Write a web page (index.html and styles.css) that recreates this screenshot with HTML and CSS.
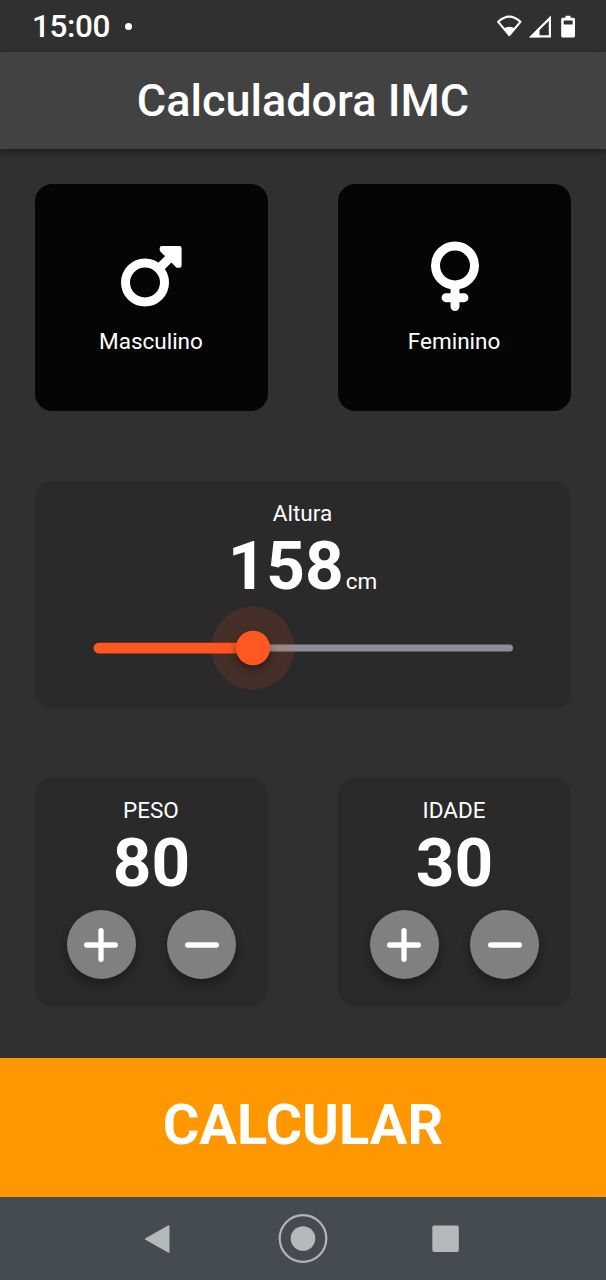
FILE: index.html
```html
<!DOCTYPE html>
<html lang="pt-BR">
<head>
<meta charset="utf-8">
<title>Calculadora IMC</title>
<link rel="stylesheet" href="styles.css">
</head>
<body>
<div class="screen">
  <div class="status-bar">
    <span class="clock">15:00</span>
    <span class="dot"></span>
    <svg class="status-icons" width="80" height="24" viewBox="0 0 80 24">
      <path d="M2.2 7.8Q13.3-2.6 24.4 7.8L13.3 21.2Z" fill="none" stroke="#fff" stroke-width="2.1" stroke-linejoin="round"/>
      <path d="M7.600 14.600Q13.3 10.800 19 14.600L13.3 22Z" fill="#fff"/>
      <path d="M35.6 22.3L53.9 4.2V22.3Z" fill="none" stroke="#fff" stroke-width="2.2"/>
      <path d="M33.5 23.3L43.500 13.500V23.3Z" fill="#fff"/>
      <path fill="#fff" fill-rule="evenodd" d="M66.500 3.800H69.500V1.700H74.500V3.800H77.500Q79 3.800 79 5.300V22Q79 23.500 77.500 23.500H66.700Q65.200 23.500 65.200 22V5.300Q65.200 3.800 66.500 3.800ZM67.700 6.500V10.600H76.600V6.500Z"/>
    </svg>
  </div>
  <header class="app-bar">Calculadora IMC</header>
  <main class="content">
    <div class="row">
      <div class="card card-dark">
        <svg class="gender" width="70" height="72" viewBox="0 0 70 72">
          <circle cx="29" cy="42.500" r="19.500" fill="none" stroke="#fff" stroke-width="9"/>
          <path d="M42 29.500L57 14.500" stroke="#fff" stroke-width="9"/>
          <path d="M46 8.300H63.300V25.500H61.700L46 9.800Z" fill="#fff" stroke="#fff" stroke-width="4.600" stroke-linejoin="round"/>
        </svg>
        <span class="label">Masculino</span>
      </div>
      <div class="card card-dark">
        <svg class="gender" width="70" height="72" viewBox="0 0 70 72">
          <circle cx="35" cy="25.500" r="19.500" fill="none" stroke="#fff" stroke-width="9"/>
          <path d="M35 47V66.500M26 57.700H44" stroke="#fff" stroke-width="8.900" stroke-linecap="round"/>
        </svg>
        <span class="label">Feminino</span>
      </div>
    </div>
    <div class="row">
      <div class="card card-height">
        <span class="label">Altura</span>
        <div class="height"><span class="number">158</span><span class="label">cm</span></div>
        <svg class="slider" width="440" height="84" viewBox="0 0 440 84">
          <rect x="170" y="38.500" width="260" height="7" rx="3.500" fill="#8d8e98"/>
          <rect x="10.500" y="36.800" width="165" height="10.600" rx="5.300" fill="#ff5722"/>
          <circle cx="170" cy="42" r="41.500" fill="#ff5722" fill-opacity=".13"/>
          <circle class="thumb" cx="170" cy="42" r="17.200" fill="#ff5722"/>
        </svg>
      </div>
    </div>
    <div class="row">
      <div class="card">
        <span class="label">PESO</span>
        <span class="number">80</span>
        <div class="buttons">
          <button class="round" aria-label="Aumentar peso"><svg width="36" height="36" viewBox="0 0 36 36"><path d="M18 3.700V32.300M3.700 18H32.300"/></svg></button>
          <button class="round" aria-label="Diminuir peso"><svg width="36" height="36" viewBox="0 0 36 36"><path d="M3.700 18H32.300"/></svg></button>
        </div>
      </div>
      <div class="card">
        <span class="label">IDADE</span>
        <span class="number">30</span>
        <div class="buttons">
          <button class="round" aria-label="Aumentar idade"><svg width="36" height="36" viewBox="0 0 36 36"><path d="M18 3.700V32.300M3.700 18H32.300"/></svg></button>
          <button class="round" aria-label="Diminuir idade"><svg width="36" height="36" viewBox="0 0 36 36"><path d="M3.700 18H32.300"/></svg></button>
        </div>
      </div>
    </div>
  </main>
  <button class="calculate">CALCULAR</button>
  <nav class="nav-bar">
    <svg width="28" height="30" viewBox="0 0 28 30"><path d="M3 15L25.500 2.300V27.700Z" fill="#b4b9ba" stroke="#b4b9ba" stroke-width="2" stroke-linejoin="round"/></svg>
    <svg width="50" height="50" viewBox="0 0 50 50"><circle cx="26" cy="24.500" r="23.300" fill="none" stroke="#b0b5b8" stroke-width="2.200"/><circle cx="26" cy="24.500" r="12.300" fill="#b4b9ba"/></svg>
    <svg width="28" height="28" viewBox="0 0 28 28"><rect x=".3" y=".5" width="26.500" height="26.500" rx="2" fill="#b4b9ba"/></svg>
  </nav>
</div>
</body>
</html>
```
FILE: styles.css
```css
* { box-sizing: border-box; }
body { margin: 0; background: #303030; }
button { border: 0; padding: 0; font: inherit; color: inherit; }
svg { display: block; flex: none; overflow: visible; }

.screen {
  width: 606px;
  height: 1280px;
  display: flex;
  flex-direction: column;
  overflow: hidden;
  background: #303030;
  color: #fff;
  font-family: Roboto, sans-serif;
}

.status-bar {
  height: 52px;
  flex: none;
  display: flex;
  align-items: center;
  padding: 2px 30px 0 32px;
}
.clock { font-size: 31.500px; font-weight: 500; line-height: 36px; letter-spacing: -.4px; }
.dot { width: 7px; height: 7px; margin: 0 0 2px 15px; border-radius: 50%; background: #fff; }
.status-icons { margin: 0 0 3px auto; }

.app-bar {
  height: 97px;
  flex: none;
  display: flex;
  align-items: center;
  justify-content: center;
  z-index: 1;
  background: #424242;
  box-shadow: 0 3px 7px rgba(0, 0, 0, .4);
  font-size: 45px;
  font-weight: 500;
}

.content {
  flex: 1;
  display: flex;
  flex-direction: column;
  gap: 69.600px;
  padding: 34.600px 34.600px 52px;
}
.row { flex: 1; display: flex; gap: 69.400px; min-height: 0; }
.card {
  flex: 1;
  display: flex;
  flex-direction: column;
  align-items: center;
  padding-top: 18.500px;
  border-radius: 17.300px;
  background: #2a2a2a;
}
.card-dark { background: #050505; padding-top: 56.500px; }
.card-height { padding-top: 19.500px; }
.gender { margin-bottom: 15.500px; }
.label { font-size: 22.500px; line-height: 26px; margin-right: 1px; }
.number { font-size: 67.500px; font-weight: 700; line-height: 80px; }
.height { display: flex; align-items: baseline; gap: 2px; }
.thumb { filter: drop-shadow(0 4px 4px rgba(0, 0, 0, .4)); }

.buttons { display: flex; gap: 31px; margin-top: 7px; }
.round {
  width: 69.400px;
  height: 69.400px;
  display: flex;
  align-items: center;
  justify-content: center;
  padding-top: 2px;
  border-radius: 50%;
  background: #808080;
  box-shadow: 0 8px 12px rgba(0, 0, 0, .2), 0 3px 8px rgba(0, 0, 0, .15);
}
.round path { stroke: #fff; stroke-width: 5.300px; stroke-linecap: round; }

.calculate {
  height: 139px;
  flex: none;
  padding-bottom: 5px;
  background: #ff9800;
  font-size: 56px;
  font-weight: 700;
}
.nav-bar {
  height: 83px;
  flex: none;
  display: flex;
  align-items: center;
  justify-content: space-between;
  padding: 0 146px 0 143px;
  background: #454c51;
}
```
